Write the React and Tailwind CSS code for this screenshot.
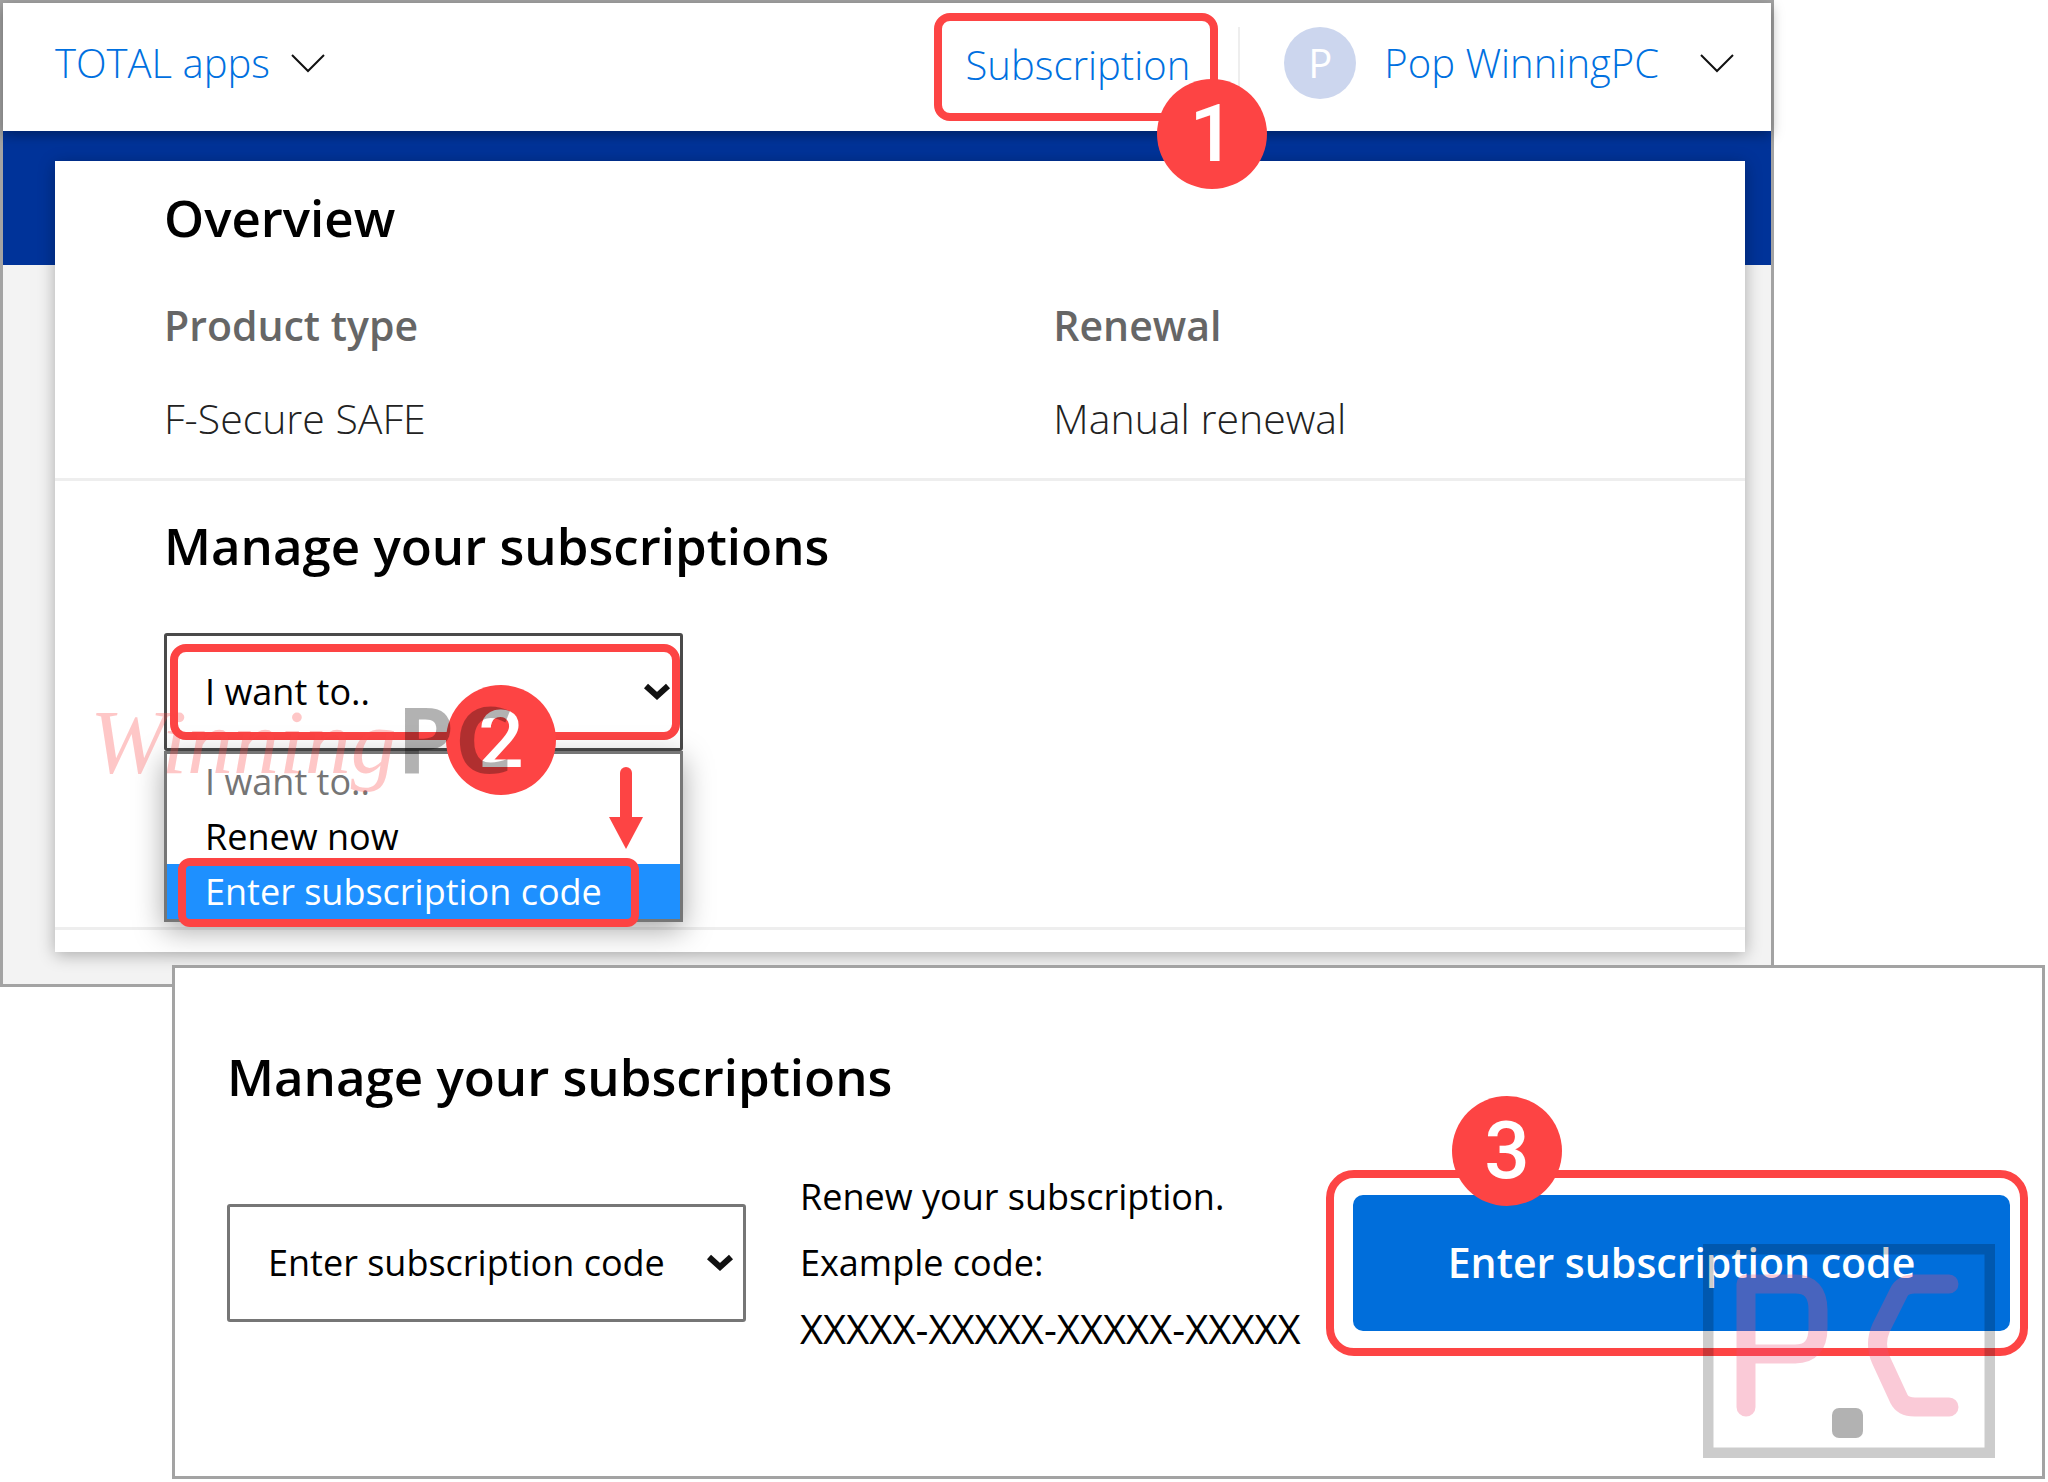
import React, { useState } from 'react';
import clsx from 'clsx';

const ACTIONS = [
    { value: 'none', label: 'I want to..' },
    { value: 'renew', label: 'Renew now' },
    { value: 'code', label: 'Enter subscription code' },
];

const DETAILS = [
    { term: 'Product type', value: 'F-Secure SAFE' },
    { term: 'Renewal', value: 'Manual renewal' },
];

const ThinChevron = () => (
    <svg className="h-5 w-9" viewBox="0 0 36 20" fill="none" stroke="#111111" strokeWidth="2" aria-hidden="true">
        <path d="M2 2 L18 18 L34 2" />
    </svg>
);

// Numbered circle used to mark a step
const StepBadge = ({ number, className }) => (
    <span
        className={clsx(
            'absolute z-20 flex size-[110px] items-center justify-center rounded-full bg-[#fd4444] font-[Roboto,sans-serif] text-[80px] leading-none font-medium text-white',
            className
        )}
    >
        {number}
    </span>
);

const ActionSelect = ({ labelId, value, onChange, className }) => (
    <div className="relative w-[519px] shrink-0">
        <select
            aria-labelledby={labelId}
            value={value}
            onChange={(e) => onChange(e.target.value)}
            className={clsx('block h-[118px] w-full appearance-none rounded-[3px] border-[3px] bg-white pl-[38px] text-[36px] text-black', className)}
        >
            {ACTIONS.map((action) => (
                <option key={action.value} value={action.value}>{action.label}</option>
            ))}
        </select>
        <svg
            className="pointer-events-none absolute top-[49px] right-3 h-5 w-7"
            viewBox="0 0 28 20"
            fill="none"
            stroke="#111111"
            strokeWidth="6"
            aria-hidden="true"
        >
            <path d="M3 4 L14 14 L25 4" />
        </svg>
    </div>
);

const TopBar = () => (
    <header className="relative z-10 flex h-32 items-center bg-white pr-9 pb-2 pl-[52px] text-[40px] leading-[56px] font-light text-[#0070e0] shadow-[0_4px_12px_rgba(0,0,0,0.35)]">
        <button type="button" className="flex items-center gap-5">
            TOTAL apps
            <ThinChevron />
        </button>
        <div className="ml-auto flex items-center">
            <div className="relative mt-2">
                <a href="#subscription" className="block rounded-2xl border-8 border-[#fd4444] pt-4 pr-5 pb-5 pl-6">
                    Subscription
                </a>
                <StepBadge number={1} className="top-[66px] -right-[49px]" />
            </div>
            <span className="ml-5 h-[72px] w-[2px] bg-[#eeeeee]" />
            <button type="button" className="ml-11 flex items-center">
                <span className="flex size-[72px] items-center justify-center rounded-full bg-[#ccd6ee] text-[40px] font-normal text-white">P</span>
                <span className="mr-10 ml-7">Pop WinningPC</span>
                <ThinChevron />
            </button>
        </div>
    </header>
);

// Opened list that hangs under the drop-down
const ActionMenu = ({ onPick }) => (
    <div className="absolute top-[118px] left-0 z-10 w-[519px] border-[3px] border-[#767676] bg-white text-[36px] leading-[55px] shadow-[0_8px_28px_rgba(0,0,0,0.35)]">
        {ACTIONS.map((action) => (
            <button
                key={action.value}
                type="button"
                onClick={() => onPick(action.value)}
                className={clsx(
                    'block w-full pl-[38px] text-left',
                    action.value === 'none' && 'text-[#757575]',
                    action.value === 'renew' && 'text-black',
                    action.value === 'code' && 'bg-[#1e90ff] text-white'
                )}
            >
                {action.label}
            </button>
        ))}
        <span className="pointer-events-none absolute -bottom-2 left-[11px] h-[69px] w-[461px] rounded-xl border-8 border-[#fd4444]" />
        <svg className="pointer-events-none absolute top-3 right-9 h-[84px] w-9" viewBox="0 0 36 84" fill="#fd4444" aria-hidden="true">
            <rect x="12" y="1" width="12" height="58" rx="6" />
            <path d="M1 51 H35 L18 83 Z" />
        </svg>
    </div>
);

const TextWatermark = () => (
    <div className="pointer-events-none absolute top-[50px] -left-[74px] z-30 flex items-baseline whitespace-nowrap">
        <span className="font-['Liberation_Serif'] text-[92px] leading-[110px] text-[#fd4444]/30 italic">Winning</span>
        <span className="text-[92px] leading-[110px] font-bold text-black/30">PC</span>
    </div>
);

const LogoWatermark = () => (
    <svg
        className="pointer-events-none absolute right-[47px] bottom-[18px] z-30 h-[214px] w-[292px]"
        viewBox="0 0 292 214"
        fill="none"
        aria-hidden="true"
    >
        <rect x="5" y="5" width="282" height="204" stroke="#000000" strokeOpacity="0.2" strokeWidth="11" />
        <g stroke="#f0507a" strokeOpacity="0.3" strokeWidth="19" strokeLinecap="round" strokeLinejoin="round">
            <path d="M43 163 V40 H92 Q115 40 115 66 V84 Q115 110 92 110 H53" />
            <path d="M246 40 H212 Q200 40 196 48 L178 84 Q171 100 178 116 L196 155 Q200 163 212 163 H246" />
        </g>
        <rect x="129" y="164" width="31" height="30" rx="7" fill="#000000" fillOpacity="0.3" />
    </svg>
);

const App = () => {
    const [firstAction, setFirstAction] = useState('none');
    const [secondAction, setSecondAction] = useState('code');

    return (
        <main className="bg-white font-['Open_Sans',sans-serif] text-black">
            {/* Account page */}
            <section className="mr-[274px] border-[3px] border-[#a3a3a3] bg-[#f3f3f3]">
                <TopBar />
                <div className="bg-linear-to-b from-[#003399] from-[134px] to-transparent to-[134px] px-[52px] pt-[30px] pb-8 pr-[26px]">
                    <div className="bg-white pb-[22px] shadow-[0_3px_16px_rgba(0,0,0,0.3)]">
                        <div className="border-b-[3px] border-[#eeeeee] pt-6 pb-8 pl-[109px]">
                            <h2 className="text-[51px] leading-[64px] font-semibold">Overview</h2>
                            <dl className="mt-12 grid grid-cols-[9fr_7fr] text-[41px] leading-[56px]">
                                {DETAILS.map((item) => (
                                    <div key={item.term}>
                                        <dt className="font-semibold text-[#666666]">{item.term}</dt>
                                        <dd className="mt-[37px] font-light text-[#222222]">{item.value}</dd>
                                    </div>
                                ))}
                            </dl>
                        </div>
                        <div className="border-b-[3px] border-[#eeeeee] pt-8 pb-44 pl-[109px]">
                            <h2 id="manage-open" className="text-[51px] leading-[64px] font-semibold">Manage your subscriptions</h2>
                            <div className="relative mt-14">
                                <ActionSelect labelId="manage-open" value={firstAction} onChange={setFirstAction} className="border-[#4a4a4a]" />
                                <span className="pointer-events-none absolute top-[11px] left-[6px] h-24 w-[510px] rounded-2xl border-8 border-[#fd4444]" />
                                <ActionMenu onPick={setFirstAction} />
                                <StepBadge number={2} className="top-[52px] left-[282px]" />
                                <TextWatermark />
                            </div>
                        </div>
                    </div>
                </div>
            </section>

            {/* Code entry panel */}
            <section className="relative z-20 -mt-[22px] mr-[3px] ml-[172px] border-[3px] border-[#a3a3a3] bg-white pt-[76px] pr-[14px] pb-[114px] pl-[52px]">
                <h2 id="manage-code" className="text-[51px] leading-[64px] font-semibold">Manage your subscriptions</h2>
                <div className="mt-14 flex items-center">
                    <ActionSelect labelId="manage-code" value={secondAction} onChange={setSecondAction} className="border-[#767676]" />
                    <div className="ml-[54px] w-[526px] shrink-0 text-[36px] leading-[66px]">
                        <p>Renew your subscription.</p>
                        <p>Example code:</p>
                        <p className="text-[40px] leading-[66px]">XXXXX-XXXXX-XXXXX-XXXXX</p>
                    </div>
                    <div className="relative flex-1 rounded-[28px] border-8 border-[#fd4444] py-[17px] pr-[10px] pl-[19px]">
                        <button type="button" className="block h-[136px] w-full rounded-[10px] bg-[#006edb] text-[41px] font-semibold text-white">
                            Enter subscription code
                        </button>
                        <StepBadge number={3} className="-top-[82px] left-[118px]" />
                    </div>
                </div>
                <LogoWatermark />
            </section>
        </main>
    );
};

export default App;
